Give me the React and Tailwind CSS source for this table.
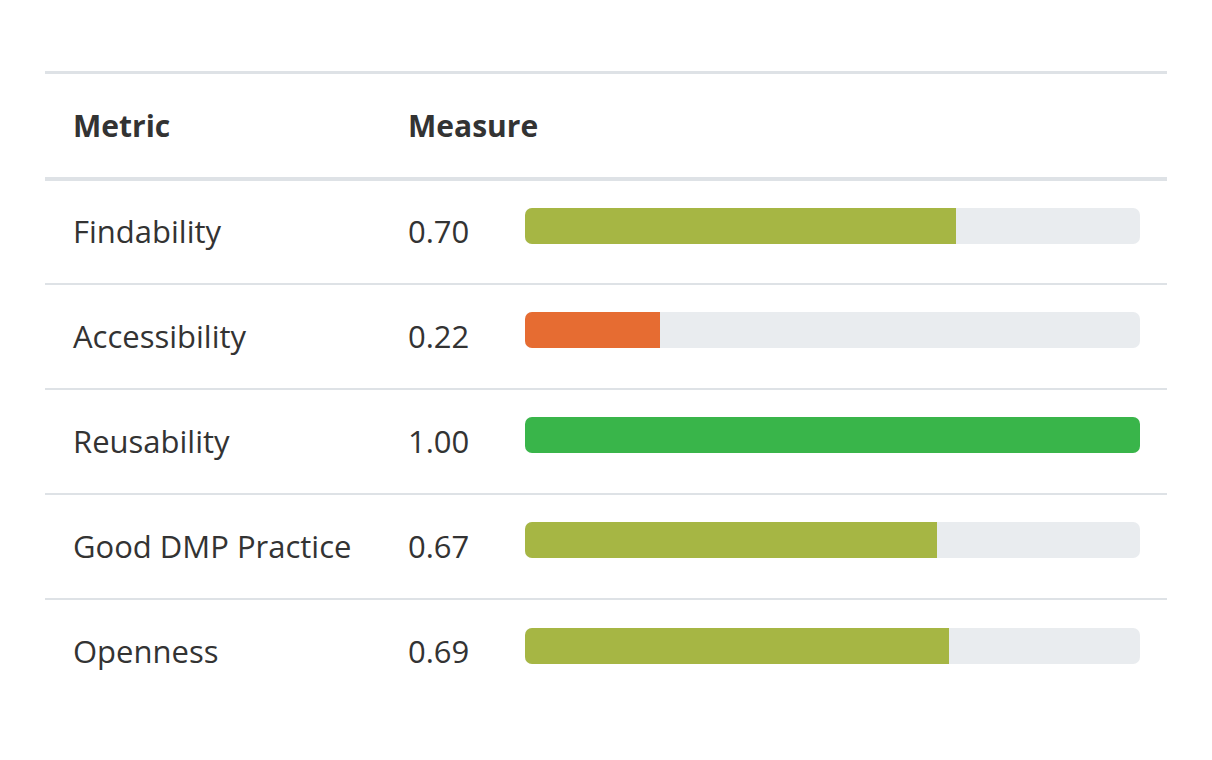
const rows = [
  { name: 'Findability', value: 0.7, color: 'bg-[#a6b644]' },
  { name: 'Accessibility', value: 0.22, color: 'bg-[#e66c32]' },
  { name: 'Reusability', value: 1.0, color: 'bg-[#39b54a]' },
  { name: 'Good DMP Practice', value: 0.67, color: 'bg-[#a6b644]' },
  { name: 'Openness', value: 0.69, color: 'bg-[#a6b644]' },
]

export default function App() {
  return (
    <div className="min-h-[760px] bg-white pt-[71px] px-[45px] text-[#333] font-['Open_Sans',sans-serif]">
      <table className="w-[1122px] table-fixed border-collapse">
        <colgroup>
          <col className="w-[335px]" />
          <col className="w-[117px]" />
          <col />
        </colgroup>
        <thead>
          <tr className="border-t-[3px] border-b-[4px] border-[#dee2e6]">
            <th className="h-[106px] pl-[28px] text-left text-[30px] font-bold align-middle">Metric</th>
            <th className="h-[106px] pl-[28px] text-left text-[30px] font-bold align-middle" colSpan={2}>Measure</th>
          </tr>
        </thead>
        <tbody>
          {rows.map((r, i) => (
            <tr key={r.name} className={i < rows.length - 1 ? 'border-b-2 border-[#dee2e6]' : ''}>
              <td className="h-[105px] pl-[28px] text-[31px] align-middle">{r.name}</td>
              <td className="h-[105px] pl-[28px] text-[31px] align-middle">{r.value.toFixed(2)}</td>
              <td className="h-[105px] pl-[28px] pr-[27px] align-middle">
                <div className="mb-[12px] h-[36px] w-full overflow-hidden rounded-[7px] bg-[#e9ecef]">
                  <div className={`h-full ${r.color}`} style={{ width: `${r.value * 100}%` }} />
                </div>
              </td>
            </tr>
          ))}
        </tbody>
      </table>
    </div>
  )
}
